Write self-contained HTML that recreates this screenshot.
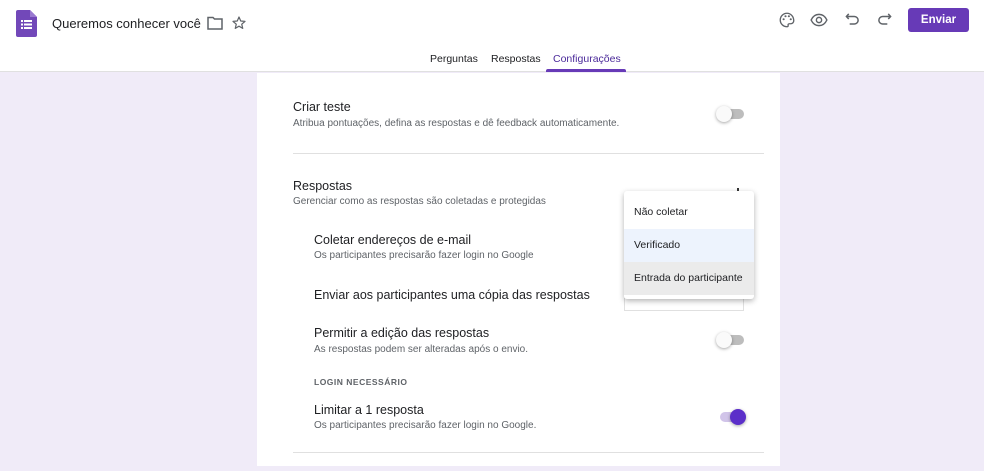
<!DOCTYPE html>
<html><head><meta charset="utf-8"><style>
*{margin:0;padding:0;box-sizing:border-box}
body{width:984px;height:471px;overflow:hidden;background:#f0ebf8;font-family:"Liberation Sans",Arial,sans-serif;position:relative;color:#202124}
.hdr{position:absolute;left:0;top:0;width:984px;height:72px;background:#fff;border-bottom:1px solid #e0e0e0}
.abs{position:absolute}
.card{position:absolute;left:257px;top:73px;width:523px;height:393px;background:#fff}
.t{position:absolute;font-size:12.5px;color:#202124;white-space:nowrap}
.s{position:absolute;font-size:10px;color:#5f6368;white-space:nowrap}
.tog{position:absolute;width:24px;height:10px;border-radius:5px;background:#bdbdbd}
.tog i{position:absolute;left:-4px;top:-3px;width:16px;height:16px;border-radius:50%;background:#fafafa;box-shadow:0 1px 3px rgba(0,0,0,.35)}
.tog.on{background:#d1c4e9}.tog.on i{left:10px;background:#5b2fc9}
.tab{position:absolute;top:53px;font-size:10.5px;color:#202124}
.menu{position:absolute;left:624px;top:191px;width:130px;height:108px;background:#fff;box-shadow:0 2px 6px rgba(0,0,0,.3);border-radius:3px;overflow:hidden}
.menu div{height:33px;line-height:33px;padding-left:10px;font-size:10.5px;color:#202124}
</style></head><body>
<div class="hdr">
<svg class="abs" style="left:16px;top:10px" width="21" height="27" viewBox="0 0 21 27"><path d="M0 2a2 2 0 0 1 2-2h12l7 7v18a2 2 0 0 1-2 2H2a2 2 0 0 1-2-2z" fill="#7248b9"/><path d="M14 0v7h7z" fill="#9a7ad1"/><g fill="#fff"><rect x="5" y="10" width="2" height="2"/><rect x="8" y="10" width="8" height="2"/><rect x="5" y="13.5" width="2" height="2"/><rect x="8" y="13.5" width="8" height="2"/><rect x="5" y="17" width="2" height="2"/><rect x="8" y="17" width="8" height="2"/></g></svg>
<div class="abs" style="left:52px;top:16px;font-size:13px;color:#202124">Queremos conhecer você</div>
<svg class="abs" style="left:207px;top:16px" width="16" height="14" viewBox="0 0 16 14"><path d="M1 1.5h5l1.5 1.5H15v10H1z" fill="none" stroke="#5f6368" stroke-width="1.5"/></svg>
<svg class="abs" style="left:231px;top:15px" width="16" height="16" viewBox="0 0 24 24"><path d="M12 3l2.6 6 6.4.6-4.9 4.2 1.5 6.3L12 16.8 6.4 20.1l1.5-6.3L3 9.6 9.4 9z" fill="none" stroke="#5f6368" stroke-width="1.8" stroke-linejoin="round"/></svg>
<svg class="abs" style="left:778px;top:11px" width="18" height="18" viewBox="0 0 24 24"><path d="M12 3a9 9 0 0 0 0 18c1.2 0 1.8-.8 1.5-1.8-.4-1.2.3-2.2 1.5-2.2H17a4 4 0 0 0 4-4c0-5.5-4-10-9-10z" fill="none" stroke="#5f6368" stroke-width="1.8"/><circle cx="7.5" cy="11" r="1.4" fill="#5f6368"/><circle cx="10" cy="7" r="1.4" fill="#5f6368"/><circle cx="14.5" cy="7" r="1.4" fill="#5f6368"/><circle cx="17" cy="11" r="1.4" fill="#5f6368"/></svg>
<svg class="abs" style="left:810px;top:12px" width="18" height="16" viewBox="0 0 24 20"><path d="M1.5 10C4 4.5 8 2.5 12 2.5s8 2 10.5 7.5C20 15.5 16 17.5 12 17.5S4 15.5 1.5 10z" fill="none" stroke="#5f6368" stroke-width="1.9"/><circle cx="12" cy="10" r="3.5" fill="none" stroke="#5f6368" stroke-width="1.9"/></svg>
<svg class="abs" style="left:845px;top:12px" width="15" height="15" viewBox="0 0 16 16"><path d="M4 2L1.5 4.8 4 7.5M1.5 4.8H10a4 4 0 0 1 0 8H5" fill="none" stroke="#5f6368" stroke-width="1.6"/></svg>
<svg class="abs" style="left:877px;top:12px" width="15" height="15" viewBox="0 0 16 16"><path d="M12 2l2.5 2.8L12 7.5M14.5 4.8H6a4 4 0 0 0 0 8h5" fill="none" stroke="#5f6368" stroke-width="1.6"/></svg>
<div class="abs" style="left:908px;top:8px;width:61px;height:24px;background:#673ab7;border-radius:3px;color:#fff;font-size:11.5px;font-weight:bold;text-align:center;line-height:24px">Enviar</div>
<div class="tab" style="left:430px">Perguntas</div>
<div class="tab" style="left:491px">Respostas</div>
<div class="tab" style="left:553px;color:#4b2a9a">Configurações</div>
<div class="abs" style="left:546px;top:69px;width:80px;height:3px;background:#673ab7;border-radius:2px 2px 0 0"></div>
</div>
<div class="card"></div>
<div class="t" style="left:293px;top:100px">Criar teste</div>
<div class="s" style="left:293px;top:118px">Atribua pontuações, defina as respostas e dê feedback automaticamente.</div>
<div class="tog" style="left:720px;top:109px"><i></i></div>
<div class="abs" style="left:293px;top:153px;width:471px;height:1px;background:#e0e0e0"></div>
<div class="t" style="left:293px;top:179px">Respostas</div>
<div class="s" style="left:293px;top:196px">Gerenciar como as respostas são coletadas e protegidas</div>
<div class="t" style="left:314px;top:233px">Coletar endereços de e-mail</div>
<div class="s" style="left:314px;top:250px">Os participantes precisarão fazer login no Google</div>
<div class="t" style="left:314px;top:288px">Enviar aos participantes uma cópia das respostas</div>
<div class="abs" style="left:624px;top:298px;width:120px;height:13px;border:1px solid #e0e0e0;border-top:none"></div>
<div class="t" style="left:314px;top:326px">Permitir a edição das respostas</div>
<div class="s" style="left:314px;top:344px">As respostas podem ser alteradas após o envio.</div>
<div class="tog" style="left:720px;top:335px"><i></i></div>
<div class="s" style="left:314px;top:377px;font-size:8.5px;letter-spacing:.5px;font-weight:bold">LOGIN NECESSÁRIO</div>
<div class="t" style="left:314px;top:403px">Limitar a 1 resposta</div>
<div class="s" style="left:314px;top:420px">Os participantes precisarão fazer login no Google.</div>
<div class="tog on" style="left:720px;top:412px"><i></i></div>
<div class="abs" style="left:293px;top:452px;width:471px;height:1px;background:#e0e0e0"></div>
<div class="menu"><div style="margin-top:5px">Não coletar</div><div style="background:#edf3fd">Verificado</div><div style="background:#ebebeb">Entrada do participante</div></div>
<div class="abs" style="left:737px;top:188px;width:2px;height:3px;background:#333"></div>
</body></html>
